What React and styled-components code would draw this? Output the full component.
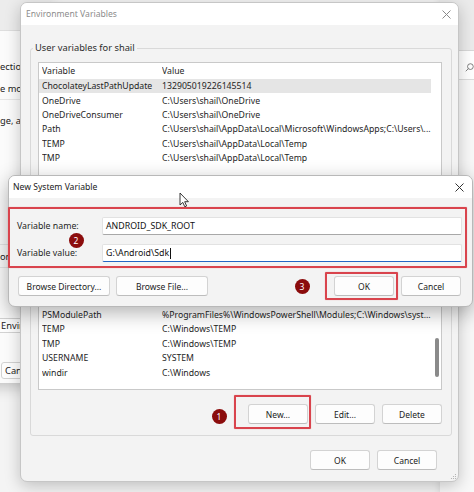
import React from 'react';
import styled, { createGlobalStyle } from 'styled-components';

const Global = createGlobalStyle`
  html, body { margin: 0; padding: 0; }
  body {
    width: 474px; height: 492px; overflow: hidden;
    font-family: "Noto Sans", "Liberation Sans", sans-serif;
    background: #f2f2f2;
  }
`;

const Desktop = styled.div`
  position: relative;
  width: 474px;
  height: 492px;
  overflow: hidden;
  background: #f4f4f4;
  font-size: 9px;
  color: #1b1b1b;
`;

/* ---------- background windows ---------- */
const BackWindow = styled.div`
  position: absolute;
  left: -40px;
  top: 0;
  width: 90px;
  height: 383px;
  background: #fbfbfb;
  box-shadow: 0 4px 14px rgba(0, 0, 0, 0.22);
  display: flex;
  flex-direction: column;
`;
const BackHeader = styled.div`
  height: 30px;
  background: #ececec;
  border-bottom: 1px solid #dedede;
  flex: none;
`;
const BackLine = styled.div`
  height: ${p => p.$h}px;
  flex: none;
  display: flex;
  align-items: center;
  padding-left: 40px;
  font-size: 9.3px;
  color: #222;
  white-space: nowrap;
  border-bottom: ${p => (p.$sep ? '1px solid #e6e6e6' : 'none')};
`;
const BackButton = styled.div`
  margin-left: ${p => p.$ml}px;
  height: ${p => p.$h}px;
  width: 80px;
  flex: none;
  display: flex;
  align-items: center;
  padding-left: 3px;
  border: 1px solid #d2d2d2;
  border-radius: 3px;
  background: #fdfdfd;
  font-size: 9.3px;
  box-sizing: border-box;
`;

const RightWindow = styled.div`
  position: absolute;
  left: 440px;
  top: -4px;
  width: 60px;
  height: 500px;
  background: #f8f8f8;
  display: flex;
  flex-direction: column;
  box-shadow: 0 2px 8px rgba(0, 0, 0, 0.12);
`;
const RightTop = styled.div`
  height: 54px;
  background: #ebebeb;
  border-bottom: 1px solid #d8d8d8;
`;
const RightSearch = styled.div`
  height: 29px;
  background: #ffffff;
  border-bottom: 1px solid #dcdcdc;
  display: flex;
  align-items: center;
  padding: 5px 0 0 25px;
  box-sizing: border-box;
`;

/* ---------- environment variables window ---------- */
const EnvWindow = styled.div`
  position: absolute;
  left: 20px;
  top: 2px;
  width: 439px;
  height: 480px;
  box-sizing: border-box;
  background: #f3f3f3;
  border: 1px solid #c6c6c6;
  border-radius: 7px;
  box-shadow: 0 4px 16px rgba(0, 0, 0, 0.22);
  overflow: hidden;
  display: flex;
  flex-direction: column;
`;
const TitleBar = styled.div`
  height: 22px;
  flex: none;
  display: flex;
  align-items: center;
  justify-content: space-between;
  padding: 0 ${p => p.$pr}px 0 ${p => p.$pl}px;
  background: #ffffff;
  color: ${p => (p.$inactive ? '#8c8c8c' : '#1a1a1a')};
  font-size: 8.6px;
`;
const WinBody = styled.div`
  flex: 1;
  display: flex;
  flex-direction: column;
  padding: 0 6px 0 9px;
  position: relative;
`;
const Group = styled.fieldset`
  margin: ${p => p.$mt}px 0 0 0;
  padding: 7px 9px ${p => p.$pb}px 7px;
  border: 1px solid #d9d9d9;
  border-radius: 3px;
  min-width: 0;
`;
const Legend = styled.legend`
  margin-left: -5px;
  padding: 0 2px;
  font-size: 9.3px;
  line-height: 14px;
  color: #2b2b2b;
`;
const ListBox = styled.div`
  height: ${p => p.$h}px;
  box-sizing: border-box;
  border: 1px solid #c9c9c9;
  background: #ffffff;
  display: flex;
  overflow: hidden;
`;
const ListRows = styled.div`
  flex: 1;
  display: flex;
  flex-direction: column;
`;
const Row = styled.div`
  height: ${p => (p.$header ? 16 : 14.4)}px;
  flex: none;
  display: flex;
  align-items: center;
  padding-left: 3px;
  background: ${p => (p.$selected ? '#e5e5e5' : 'transparent')};
  white-space: nowrap;
  color: #1e1e1e;
  font-size: 8.7px;
`;
const NameCell = styled.div`
  width: 120px;
  flex: none;
  overflow: hidden;
`;
const ValueCell = styled.div`
  flex: 1;
  overflow: hidden;
`;
const Track = styled.div`
  width: 13px;
  flex: none;
  display: flex;
  justify-content: center;
`;
const Thumb = styled.div`
  margin-top: ${p => p.$top}px;
  width: 4px;
  height: ${p => p.$h}px;
  border-radius: 2px;
  background: #8a8a8a;
`;
const ButtonRow = styled.div`
  display: flex;
  justify-content: ${p => p.$justify || 'flex-end'};
  gap: ${p => p.$gap || 7}px;
  margin-top: ${p => p.$mt || 0}px;
  padding-right: ${p => p.$pr || 0}px;
  padding-left: ${p => p.$pl || 0}px;
`;
const ButtonGroup = styled.div`
  display: flex;
  gap: ${p => p.$gap}px;
`;
const Button = styled.div`
  width: ${p => p.$w || 60}px;
  height: 20px;
  box-sizing: border-box;
  display: flex;
  align-items: center;
  justify-content: center;
  border: 1px solid #d3d3d3;
  border-bottom-color: #bdbdbd;
  border-radius: 3px;
  background: #fdfdfd;
  font-size: 8.5px;
  color: #1b1b1b;
`;
const Grip = styled.svg`
  position: absolute;
  right: 1px;
  bottom: 1px;
`;

/* ---------- new system variable dialog ---------- */
const Dialog = styled.div`
  position: absolute;
  left: 8px;
  top: 175px;
  width: 465px;
  height: 132px;
  box-sizing: border-box;
  background: #f3f3f3;
  border: 1px solid #b8b8b8;
  border-radius: 7px;
  box-shadow: 0 6px 20px rgba(0, 0, 0, 0.3);
  overflow: hidden;
  display: flex;
  flex-direction: column;
`;
const DialogBody = styled.div`
  padding: 19px 10px 0 8px;
  display: flex;
  flex-direction: column;
`;
const Form = styled.div`
  display: grid;
  grid-template-columns: 85px 1fr;
  grid-auto-rows: 18px;
  row-gap: 9px;
  align-items: center;
`;
const Label = styled.div`
  font-size: 8.8px;
  color: #1e1e1e;
`;
const Input = styled.div`
  height: 18px;
  box-sizing: border-box;
  display: flex;
  align-items: center;
  padding-left: 3px;
  background: #ffffff;
  border: 1px solid #e2e2e2;
  border-bottom: ${p => (p.$focused ? '1.5px solid #2366c4' : '1px solid #a8a8a8')};
  border-radius: 2px;
  font-size: 8.8px;
  color: #111;
`;
const Caret = styled.span`
  display: inline-block;
  width: 1px;
  height: 11px;
  margin-left: 1px;
  background: #111;
`;

/* ---------- annotations ---------- */
const Highlight = styled.div`
  position: absolute;
  left: ${p => p.$x}px;
  top: ${p => p.$y}px;
  width: ${p => p.$w}px;
  height: ${p => p.$h}px;
  box-sizing: border-box;
  border: 2px solid #d9444d;
  border-radius: 1px;
  box-shadow: 0 0 1px rgba(217, 68, 77, 0.6);
`;
const Badge = styled.div`
  position: absolute;
  left: ${p => p.$x - 7.5}px;
  top: ${p => p.$y - 7.5}px;
  width: 15px;
  height: 15px;
  border-radius: 50%;
  background: #8b0c0c;
  color: #ffffff;
  font-size: 8.5px;
  display: flex;
  align-items: center;
  justify-content: center;
`;
const Cursor = styled.svg`
  position: absolute;
  left: 179px;
  top: 192px;
`;

const CloseIcon = ({ color }) => (
  <svg width="9" height="9" viewBox="0 0 9 9">
    <path d="M0.5 0.5 L8.5 8.5 M8.5 0.5 L0.5 8.5" stroke={color} strokeWidth="1" fill="none" />
  </svg>
);

const userVars = [
  ['ChocolateyLastPathUpdate', '132905019226145514'],
  ['OneDrive', 'C:\\Users\\shail\\OneDrive'],
  ['OneDriveConsumer', 'C:\\Users\\shail\\OneDrive'],
  ['Path', 'C:\\Users\\shail\\AppData\\Local\\Microsoft\\WindowsApps;C:\\Users\\...'],
  ['TEMP', 'C:\\Users\\shail\\AppData\\Local\\Temp'],
  ['TMP', 'C:\\Users\\shail\\AppData\\Local\\Temp'],
];

const sysVars = [
  ['PROCESSOR_LEVEL', '6'],
  ['PROCESSOR_REVISION', '8c01'],
  ['PSModulePath', '%ProgramFiles%\\WindowsPowerShell\\Modules;C:\\Windows\\syst...'],
  ['TEMP', 'C:\\Windows\\TEMP'],
  ['TMP', 'C:\\Windows\\TEMP'],
  ['USERNAME', 'SYSTEM'],
  ['windir', 'C:\\Windows'],
];

const VarList = ({ rows, height, selected, thumb }) => (
  <ListBox $h={height}>
    <ListRows>
      <Row $header>
        <NameCell>Variable</NameCell>
        <ValueCell>Value</ValueCell>
      </Row>
      {rows.map(([n, v], i) => (
        <Row key={n + i} $selected={i === selected}>
          <NameCell>{n}</NameCell>
          <ValueCell>{v}</ValueCell>
        </Row>
      ))}
    </ListRows>
    <Track>{thumb && <Thumb $top={thumb.top} $h={thumb.h} />}</Track>
  </ListBox>
);

export default function App() {
  return (
    <>
      <Global />
      <Desktop>
        <BackWindow>
          <BackHeader />
          <BackLine $h={24} />
          <BackLine $h={22}>ection</BackLine>
          <BackLine $h={22} $sep>e most</BackLine>
          <BackLine $h={40}>ge, and</BackLine>
          <BackLine $h={104} $sep />
          <BackLine $h={22} $sep>on</BackLine>
          <BackLine $h={46} />
          <BackLine $h={22}>
            <BackButton $ml={-3} $h={15}>Environment</BackButton>
          </BackLine>
          <BackLine $h={26} />
          <BackLine $h={17}>
            <BackButton $ml={1} $h={17}>Cancel</BackButton>
          </BackLine>
        </BackWindow>

        <RightWindow>
          <RightTop />
          <RightSearch>
            <svg width="9" height="9" viewBox="0 0 10 10">
              <circle cx="6" cy="4" r="3.2" stroke="#666" strokeWidth="0.9" fill="none" />
              <path d="M3.7 6.3 L0.8 9.2" stroke="#666" strokeWidth="0.9" />
            </svg>
          </RightSearch>
        </RightWindow>

        <EnvWindow>
          <TitleBar $inactive $pl={5} $pr={7}>
            <span>Environment Variables</span>
            <CloseIcon color="#8a8a8a" />
          </TitleBar>
          <WinBody>
            <Group $mt={16} $pb={8}>
              <Legend>User variables for shail</Legend>
              <VarList rows={userVars} height={120} selected={0} />
              <ButtonRow $mt={8}>
                <Button>New...</Button>
                <Button>Edit...</Button>
                <Button>Delete</Button>
              </ButtonRow>
            </Group>
            <Group $mt={22} $pb={11}>
              <Legend>System variables</Legend>
              <VarList rows={sysVars} height={128} thumb={{ top: 75, h: 39 }} />
              <ButtonRow $mt={14}>
                <Button>New...</Button>
                <Button>Edit...</Button>
                <Button>Delete</Button>
              </ButtonRow>
            </Group>
            <ButtonRow $mt={14} $pr={15}>
              <Button>OK</Button>
              <Button>Cancel</Button>
            </ButtonRow>
            <Grip width="8" height="8" viewBox="0 0 8 8">
              <circle cx="6.5" cy="2.5" r="0.6" fill="#aaa" />
              <circle cx="4.5" cy="4.5" r="0.6" fill="#aaa" />
              <circle cx="6.5" cy="4.5" r="0.6" fill="#aaa" />
              <circle cx="2.5" cy="6.5" r="0.6" fill="#aaa" />
              <circle cx="4.5" cy="6.5" r="0.6" fill="#aaa" />
              <circle cx="6.5" cy="6.5" r="0.6" fill="#aaa" />
            </Grip>
          </WinBody>
        </EnvWindow>

        <Dialog>
          <TitleBar $pl={4} $pr={8}>
            <span>New System Variable</span>
            <CloseIcon color="#333" />
          </TitleBar>
          <DialogBody>
            <Form>
              <Label>Variable name:</Label>
              <Input>ANDROID_SDK_ROOT</Input>
              <Label>Variable value:</Label>
              <Input $focused>
                G:\Android\Sdk<Caret />
              </Input>
            </Form>
            <ButtonRow $mt={14} $justify="space-between" $pr={1} $pl={1}>
              <ButtonGroup $gap={6}>
                <Button $w={92}>Browse Directory...</Button>
                <Button $w={92}>Browse File...</Button>
              </ButtonGroup>
              <ButtonGroup $gap={7}>
                <Button>OK</Button>
                <Button>Cancel</Button>
              </ButtonGroup>
            </ButtonRow>
          </DialogBody>
        </Dialog>

        <Cursor width="11" height="16" viewBox="0 0 11 16">
          <path d="M1 1 L1 13 L3.8 10.4 L5.8 14.8 L7.6 14 L5.7 9.7 L9.4 9.7 Z" fill="#ffffff" stroke="#222" strokeWidth="0.9" strokeLinejoin="round" />
        </Cursor>

        <Highlight $x={8} $y={207} $w={459} $h={61} />
        <Highlight $x={325} $y={272} $w={73} $h={28} />
        <Highlight $x={234} $y={395} $w={77} $h={34} />
        <Badge $x={76} $y={240}>2</Badge>
        <Badge $x={302} $y={286}>3</Badge>
        <Badge $x={219} $y={416}>1</Badge>
      </Desktop>
    </>
  );
}
